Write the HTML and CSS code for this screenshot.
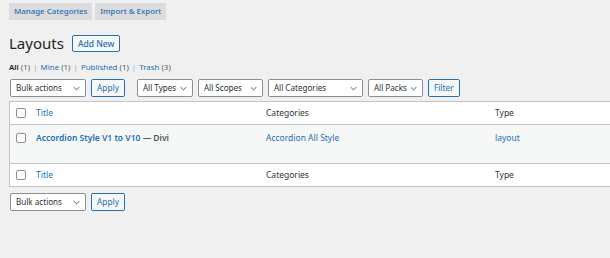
FILE: index.html
```html
<!DOCTYPE html>
<html>
<head>
<meta charset="utf-8">
<link rel="stylesheet" href="styles.css">
</head>
<body>
<div class="wrap">
  <div class="top-links">
    <a class="tab-btn">Manage Categories</a>
    <a class="tab-btn">Import &amp; Export</a>
  </div>
  <div class="heading">
    <h1>Layouts</h1>
    <a class="add-new">Add New</a>
  </div>
  <div class="subsub">
    <span class="cur">All</span> <span class="cnt">(1)</span> <span class="sep">|</span>
    <a>Mine</a> <span class="cnt">(1)</span> <span class="sep">|</span>
    <a>Published</a> <span class="cnt">(1)</span> <span class="sep">|</span>
    <a>Trash</a> <span class="cnt">(3)</span>
  </div>
  <div class="toolbar">
    <div class="sel w-bulk">Bulk actions<svg class="chev" viewBox="0 0 10 6"><path d="M1 1l4 4 4-4"/></svg></div>
    <div class="btn">Apply</div>
    <div class="sel w-types gap-l">All Types<svg class="chev" viewBox="0 0 10 6"><path d="M1 1l4 4 4-4"/></svg></div>
    <div class="sel w-scopes">All Scopes<svg class="chev" viewBox="0 0 10 6"><path d="M1 1l4 4 4-4"/></svg></div>
    <div class="sel w-cats">All Categories<svg class="chev" viewBox="0 0 10 6"><path d="M1 1l4 4 4-4"/></svg></div>
    <div class="sel w-packs">All Packs<svg class="chev" viewBox="0 0 10 6"><path d="M1 1l4 4 4-4"/></svg></div>
    <div class="btn">Filter</div>
  </div>
  <div class="table">
    <div class="row head">
      <div class="cb"><span class="box"></span></div>
      <div class="c-title link">Title</div>
      <div class="c-cat">Categories</div>
      <div class="c-type">Type</div>
    </div>
    <div class="row data">
      <div class="cb"><span class="box"></span></div>
      <div class="c-title"><span class="row-title">Accordion Style V1 to V10</span><span class="post-state"> — Divi</span></div>
      <div class="c-cat link">Accordion All Style</div>
      <div class="c-type link">layout</div>
    </div>
    <div class="row foot">
      <div class="cb"><span class="box"></span></div>
      <div class="c-title link">Title</div>
      <div class="c-cat">Categories</div>
      <div class="c-type">Type</div>
    </div>
  </div>
  <div class="toolbar bottom">
    <div class="sel w-bulk">Bulk actions<svg class="chev" viewBox="0 0 10 6"><path d="M1 1l4 4 4-4"/></svg></div>
    <div class="btn">Apply</div>
  </div>
</div>
</body>
</html>
```
FILE: styles.css
```css
html, body {
  margin: 0;
  padding: 0;
  background: #f0f0f1;
  overflow: hidden;
}
body {
  font-family: "Segoe UI", "Noto Sans", "Open Sans", sans-serif;
  font-size: 9px;
  color: #3c434a;
}
.wrap {
  padding: 3px 0 0 9px;
}
.top-links {
  display: flex;
  gap: 3px;
}
.tab-btn {
  display: block;
  height: 17px;
  line-height: 17px;
  padding: 0 5px;
  background: #dcdcde;
  color: #2271b1;
  font-weight: 500;
  font-size: 7.9px;
}
.heading {
  display: flex;
  align-items: center;
  margin-top: 14px;
  height: 18px;
}
.heading h1 {
  margin: 0;
  font-size: 15px;
  font-weight: 400;
  color: #1d2327;
  line-height: 18px;
}
.add-new {
  margin-left: 8px;
  height: 15px;
  line-height: 15px;
  padding: 0 5px;
  border: 1px solid #2271b1;
  border-radius: 2px;
  background: #f6f7f7;
  color: #2271b1;
  font-size: 8.5px;
  font-weight: 500;
}
.subsub {
  margin-top: 9px;
  height: 12px;
  line-height: 12px;
  font-size: 7.9px;
  color: #646970;
}
.subsub a { color: #2271b1; }
.subsub .cur { color: #1d2327; font-weight: 600; }
.subsub .cnt { color: #50575e; }
.subsub .sep { color: #a7aaad; margin: 0 1px; }
.toolbar {
  display: flex;
  align-items: center;
  gap: 5px;
  margin-top: 6px;
  padding-left: 1px;
}
.sel {
  position: relative;
  box-sizing: border-box;
  height: 18px;
  line-height: 16px;
  padding-left: 5px;
  border: 1px solid #8c8f94;
  border-radius: 2px;
  background: #fff;
  color: #2c3338;
  font-size: 8.1px;
  white-space: nowrap;
}
.chev {
  position: absolute;
  right: 5px;
  top: 6px;
  width: 7px;
  height: 5px;
  fill: none;
  stroke: #50575e;
  stroke-width: 1.4;
}
.w-bulk { width: 76px; }
.w-types { width: 56px; }
.w-scopes { width: 65px; }
.w-cats { width: 95px; }
.w-packs { width: 55px; }
.gap-l { margin-left: 7px; }
.btn {
  box-sizing: border-box;
  height: 18px;
  line-height: 16px;
  padding: 0 5px;
  border: 1px solid #2271b1;
  border-radius: 2px;
  background: #f6f7f7;
  color: #2271b1;
  font-size: 8.3px;
}
.table {
  margin-top: 4px;
  width: 620px;
  border: 1px solid #c3c4c7;
  background: #fff;
  box-sizing: border-box;
}
.row {
  display: grid;
  grid-template-columns: 26px 230px 229px 1fr;
  font-size: 8.5px;
  color: #2c3338;
}
.row.head {
  height: 23px;
  align-items: center;
  border-bottom: 1px solid #c3c4c7;
  box-sizing: border-box;
}
.row.data {
  height: 38px;
  background: #f6f7f7;
  align-items: start;
  padding-top: 7px;
  box-sizing: border-box;
}
.row.foot {
  height: 23px;
  align-items: center;
  border-top: 1px solid #c3c4c7;
  box-sizing: border-box;
}
.cb {
  display: flex;
  align-items: center;
  padding-left: 6px;
  height: 12px;
}
.box {
  display: block;
  box-sizing: border-box;
  width: 10px;
  height: 10px;
  border: 1px solid #8c8f94;
  border-radius: 2px;
  background: #fff;
}
.link { color: #2271b1; }
.row-title { color: #2271b1; font-weight: 600; }
.post-state { color: #50575e; font-weight: 600; }
.c-title, .c-cat, .c-type { line-height: 12px; }
.toolbar.bottom { margin-top: 6px; }
```
